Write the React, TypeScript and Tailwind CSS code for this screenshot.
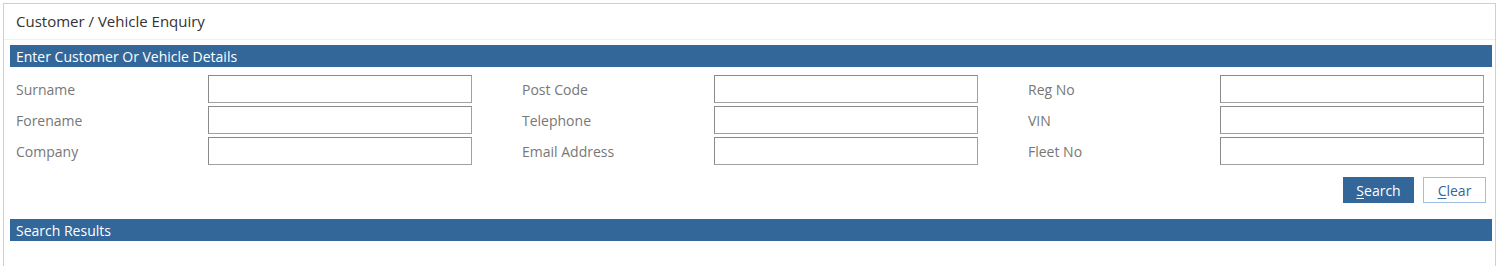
const FIELDS: string[][] = [
  ["Surname", "Forename", "Company"],
  ["Post Code", "Telephone", "Email Address"],
  ["Reg No", "VIN", "Fleet No"],
];

export default function App() {
  return (
    <div className="h-[266px] bg-white pl-[3px] pt-[3px] pr-[8px] font-['Open_Sans',sans-serif] overflow-hidden">
      <div className="h-[280px] border border-[#cfcfcf] bg-white">
        {/* Title */}
        <div className="h-[36px] border-b border-[#eef0f3] pl-[12px] pt-[7px] text-[15px] leading-[21px] text-[#333]">
          Customer / Vehicle Enquiry
        </div>

        <div className="ml-[6px] mr-[3px] mt-[5px]">
          <SectionBar label="Enter Customer Or Vehicle Details" />

          {/* Form */}
          <div className="mt-[8px] flex">
            {FIELDS.map((col, i) => (
              <div key={i} className={i < 2 ? "w-[506px]" : "flex-1"}>
                <div className="flex flex-col gap-[3px]">
                  {col.map((label) => (
                    <div key={label} className="flex h-[28px] items-center">
                      <label className="w-[198px] pl-[6px] text-[14px] text-[#777]">{label}</label>
                      <input
                        type="text"
                        className="h-[28px] w-[264px] border border-[#a0a0a0] border-l-[#8a8a8a] border-t-[#8a8a8a] bg-white px-1 text-[14px] outline-none"
                      />
                    </div>
                  ))}
                </div>
              </div>
            ))}
          </div>

          {/* Buttons */}
          <div className="mt-[12px] flex justify-end gap-[9px] pr-[6px]">
            <button className="h-[26px] w-[71px] bg-[#336699] text-[14px] text-white">
              <span className="underline underline-offset-2">S</span>earch
            </button>
            <button className="h-[26px] w-[63px] border border-[#9fc0e4] bg-white text-[14px] text-[#336699]">
              <span className="underline underline-offset-2">C</span>lear
            </button>
          </div>

          <div className="mt-[16px]">
            <SectionBar label="Search Results" />
          </div>
        </div>
      </div>
    </div>
  );
}

function SectionBar({ label }: { label: string }) {
  return (
    <div className="flex h-[22px] items-center bg-[#336699] pl-[6px] text-[14px] text-white">{label}</div>
  );
}
